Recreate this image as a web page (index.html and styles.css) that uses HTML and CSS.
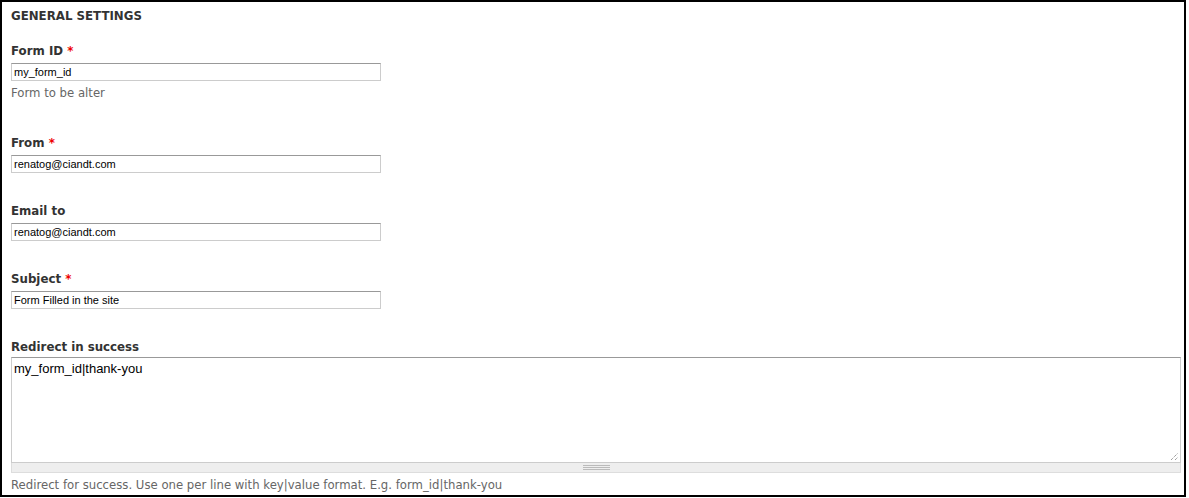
FILE: index.html
```html
<!DOCTYPE html>
<html>
<head>
<meta charset="utf-8">
<link rel="stylesheet" href="styles.css">
</head>
<body>
<div class="fieldset">
  <h2 class="legend">General settings</h2>

  <div class="form-item">
    <label class="label">Form ID <span class="req">*</span></label>
    <input class="text" type="text" value="my_form_id">
    <div class="description">Form to be alter</div>
  </div>

  <div class="form-item">
    <label class="label">From <span class="req">*</span></label>
    <input class="text" type="text" value="renatog@ciandt.com">
  </div>

  <div class="form-item">
    <label class="label">Email to</label>
    <input class="text" type="text" value="renatog@ciandt.com">
  </div>

  <div class="form-item">
    <label class="label">Subject <span class="req">*</span></label>
    <input class="text" type="text" value="Form Filled in the site">
  </div>

  <div class="form-item last">
    <label class="label tight">Redirect in success</label>
    <div class="textarea-wrap">
      <textarea class="area">my_form_id|thank-you</textarea>
      <svg class="resizer" width="9" height="9" viewBox="0 0 9 9">
        <path d="M1 8 L8 1" stroke="#777" stroke-width="1" stroke-dasharray="1 1"/>
        <path d="M5 8 L8 5" stroke="#777" stroke-width="1" stroke-dasharray="1 1"/>
      </svg>
    </div>
    <div class="grippie"><span class="grip"></span></div>
    <div class="description">Redirect for success. Use one per line with key|value format. E.g. form_id|thank-you</div>
  </div>
</div>
</body>
</html>
```

FILE: styles.css
```css
html, body {
  margin: 0;
  padding: 0;
  background: #fff;
}

body {
  font-family: "DejaVu Sans", "Liberation Sans", sans-serif;
  color: #333;
}

.fieldset {
  box-sizing: border-box;
  width: 1186px;
  height: 497px;
  border: 2px solid #000;
  padding: 6px 3px 0 9px;
}

.legend {
  margin: 0 0 18px;
  font-size: 11.8px;
  line-height: 16px;
  font-weight: bold;
  text-transform: uppercase;
  color: #333;
}

.form-item {
  margin-bottom: 29px;
}

.form-item.last {
  margin-bottom: 0;
}

.label {
  display: block;
  font-size: 11.8px;
  line-height: 18px;
  font-weight: bold;
  color: #333;
  margin-bottom: 3px;
}

.label.tight {
  margin-bottom: 1px;
}

.req {
  color: #e00;
}

.text {
  display: block;
  box-sizing: border-box;
  width: 370px;
  height: 18px;
  margin: 0;
  padding: 0 2px;
  border: 1px solid #ccc;
  border-top-color: #999;
  font-family: "Liberation Sans", Arial, sans-serif;
  font-size: 11px;
  color: #000;
  background: #fff;
  outline: none;
}

.description {
  font-size: 11.7px;
  line-height: 16px;
  color: #666;
  margin-top: 4px;
  padding-bottom: 4px;
}

.textarea-wrap {
  position: relative;
  width: 1170px;
}

.area {
  display: block;
  box-sizing: border-box;
  width: 1170px;
  height: 106px;
  margin: 0;
  padding: 3px 2px;
  border: 1px solid #ccc;
  border-top-color: #999;
  font-family: "Liberation Sans", Arial, sans-serif;
  font-size: 13px;
  line-height: 16px;
  color: #000;
  resize: none;
  outline: none;
}

.resizer {
  position: absolute;
  right: 2px;
  bottom: 2px;
}

.grippie {
  box-sizing: border-box;
  width: 1170px;
  height: 10px;
  background: #eee;
  border: 1px solid #ddd;
  border-top: 0;
  display: flex;
  justify-content: center;
  align-items: center;
}

.grip {
  width: 27px;
  height: 5px;
  border-top: 1px solid #bbb;
  border-bottom: 1px solid #bbb;
  box-sizing: border-box;
  background: linear-gradient(#bbb, #bbb) center / 100% 1px no-repeat;
}

.form-item.last .description {
  margin-top: 4px;
  padding-bottom: 0;
}
```
